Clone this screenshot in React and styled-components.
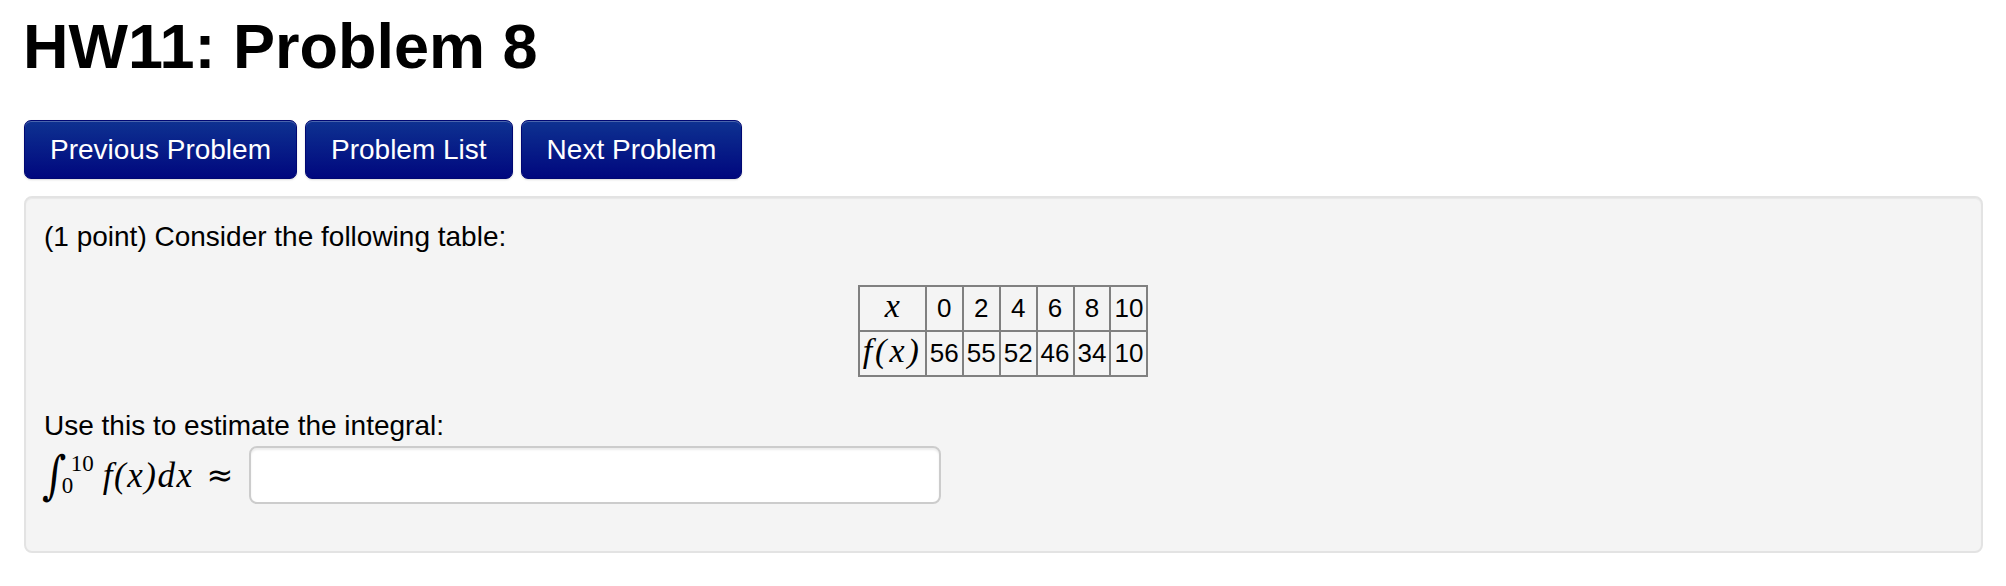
import React from "react";
import styled, { createGlobalStyle } from "styled-components";

const GlobalStyle = createGlobalStyle`
  html, body {
    margin: 0;
    padding: 0;
    background: #ffffff;
  }
  body {
    font-family: "Liberation Sans", Arial, Helvetica, sans-serif;
    color: #000;
  }
`;

const Page = styled.div`
  padding: 0 23px 0 24px;
`;

const Title = styled.h1`
  margin: 6px 0 0 -1px;
  font-size: 63px;
  line-height: 80px;
  font-weight: 700;
  color: #000;
`;

const NavBar = styled.div`
  display: flex;
  gap: 8px;
  margin-top: 34px;
`;

const NavButton = styled.button`
  height: 59px;
  padding: 0 25px;
  font-family: "Liberation Sans", Arial, sans-serif;
  font-size: 28px;
  line-height: 57px;
  color: #fff;
  background: linear-gradient(to bottom, #0e3291, #00077e);
  border: 1px solid #000772;
  border-radius: 7px;
  box-shadow: inset 0 1px 0 rgba(255, 255, 255, 0.25), 0 1px 2px rgba(0, 0, 0, 0.15);
  cursor: pointer;
`;

const ProblemWell = styled.div`
  margin-top: 17px;
  padding: 19px 19px 47px 18px;
  background: #f4f4f4;
  border: 2px solid #e3e3e3;
  border-radius: 8px;
  box-shadow: inset 0 1px 1px rgba(0, 0, 0, 0.05);
`;

const Paragraph = styled.div`
  font-size: 28px;
  line-height: 40px;
`;

const DataTable = styled.table`
  margin: 28px auto 29px;
  border-collapse: collapse;
  font-size: 26px;
`;

const Cell = styled.td`
  border: 2px solid #808080;
  padding: 0 3px;
  height: 43px;
  line-height: 43px;
  text-align: center;
  white-space: nowrap;
`;

const MathText = styled.span`
  font-family: "Liberation Serif", "Times New Roman", serif;
  font-style: italic;
  font-size: ${({ $size }) => $size || 32}px;
  line-height: 1;
  letter-spacing: ${({ $spacing }) => $spacing || 0}px;
`;

const IntegralRow = styled.div`
  display: flex;
  align-items: center;
  height: 58px;
`;

const MathExpr = styled.div`
  display: flex;
  align-items: center;
  width: 205px;
  font-family: "Liberation Serif", "Times New Roman", serif;
`;

const IntSign = styled.span`
  font-family: "DejaVu Serif", serif;
  font-size: 40px;
  line-height: 1;
  transform: scaleY(1.3) skewX(-6deg);
`;

const Limits = styled.span`
  display: flex;
  flex-direction: column;
  align-items: flex-start;
  margin-left: -3px;
  font-size: 23px;
  line-height: 22px;
`;

const Limit = styled.span`
  margin-left: ${({ $offset }) => $offset || 0}px;
`;

const Expr = styled(MathText)`
  margin-left: 9px;
`;

const Approx = styled.span`
  margin-left: 13px;
  font-family: "DejaVu Sans", sans-serif;
  font-size: 32px;
`;

const AnswerInput = styled.input`
  box-sizing: border-box;
  width: 692px;
  height: 58px;
  padding: 0 12px;
  font-size: 28px;
  background: #fff;
  border: 2px solid #cccccc;
  border-radius: 8px;
  box-shadow: inset 0 2px 2px rgba(0, 0, 0, 0.075);
  outline: none;
`;

const xs = [0, 2, 4, 6, 8, 10];
const fx = [56, 55, 52, 46, 34, 10];

const App = () => {
  return (
    <Page>
      <GlobalStyle />
      <Title>HW11: Problem 8</Title>
      <NavBar>
        <NavButton>Previous Problem</NavButton>
        <NavButton>Problem List</NavButton>
        <NavButton>Next Problem</NavButton>
      </NavBar>
      <ProblemWell>
        <Paragraph>(1 point) Consider the following table:</Paragraph>
        <DataTable>
          <tbody>
            <tr>
              <Cell>
                <MathText $size={34}>x</MathText>
              </Cell>
              {xs.map((v) => (
                <Cell key={v}>{v}</Cell>
              ))}
            </tr>
            <tr>
              <Cell>
                <MathText $size={34} $spacing={3}>f(x)</MathText>
              </Cell>
              {fx.map((v, i) => (
                <Cell key={i}>{v}</Cell>
              ))}
            </tr>
          </tbody>
        </DataTable>
        <Paragraph>Use this to estimate the integral:</Paragraph>
        <IntegralRow>
          <MathExpr>
            <IntSign>∫</IntSign>
            <Limits>
              <Limit $offset={9}>10</Limit>
              <Limit>0</Limit>
            </Limits>
            <Expr $size={35} $spacing={1.5}>
              f(x)dx
            </Expr>
            <Approx>≈</Approx>
          </MathExpr>
          <AnswerInput type="text" />
        </IntegralRow>
      </ProblemWell>
    </Page>
  );
};

export default App;
